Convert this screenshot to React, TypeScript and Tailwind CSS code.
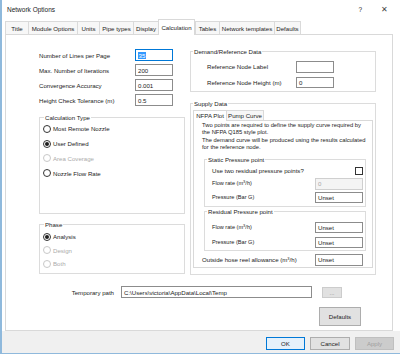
import React from "react";

type FieldProps = {
  value?: string;
  w?: string;
  disabled?: boolean;
  focused?: boolean;
  selected?: boolean;
};

function Field({ value = "", w = "w-[38px]", disabled, focused, selected }: FieldProps) {
  const border = focused
    ? "border-[#0078d7]"
    : disabled
    ? "border-[#cfcfcf]"
    : "border-[#8c8c8c]";
  const bg = disabled ? "bg-[#f4f4f4] text-[#a8a8a8]" : "bg-white";
  return (
    <div className={`${w} h-[11.5px] shrink-0 border ${border} ${bg} flex items-center pl-[2px]`}>
      {selected ? (
        <span className="bg-[#3399ff] text-white px-[0.5px]">{value}</span>
      ) : (
        <span>{value}</span>
      )}
    </div>
  );
}

function Radio({ label, checked, disabled }: { label: string; checked?: boolean; disabled?: boolean }) {
  return (
    <div className="flex items-center h-[14.8px]">
      <span
        className={`w-[8px] h-[8px] rounded-full border bg-white flex items-center justify-center ${
          disabled ? "border-[#c8c8c8]" : "border-[#333333]"
        }`}
      >
        {checked && <span className="w-[4px] h-[4px] rounded-full bg-[#1e1e1e]" />}
      </span>
      <span className={`ml-[2px] ${disabled ? "text-[#ababab]" : ""}`}>{label}</span>
    </div>
  );
}

function PhaseRadio({ label, checked, disabled }: { label: string; checked?: boolean; disabled?: boolean }) {
  return (
    <div className="flex items-center h-[13.5px]">
      <span
        className={`w-[8px] h-[8px] rounded-full border bg-white flex items-center justify-center ${
          disabled ? "border-[#c8c8c8]" : "border-[#333333]"
        }`}
      >
        {checked && <span className="w-[4px] h-[4px] rounded-full bg-[#1e1e1e]" />}
      </span>
      <span className={`ml-[2px] ${disabled ? "text-[#ababab]" : ""}`}>{label}</span>
    </div>
  );
}

const tabs = [
  { t: "Title", w: "w-[23px]" },
  { t: "Module Options", w: "w-[49px]" },
  { t: "Units", w: "w-[22px]" },
  { t: "Pipe types", w: "w-[34px]" },
  { t: "Display", w: "w-[25px]" },
  { t: "Calculation", w: "w-[37px]", sel: true },
  { t: "Tables", w: "w-[24px]" },
  { t: "Network templates", w: "w-[55px]" },
  { t: "Defaults", w: "w-[27px]" },
];

export default function App() {
  return (
    <div className="w-[400px] h-[358px] bg-white overflow-hidden font-['Liberation_Sans',Arial,sans-serif] text-[6.1px] leading-[7px] text-[#1b1b1b]">
      <div className="w-[400px] h-[354px] border-l-[2px] border-b border-[#8fb9dc] flex flex-col">
        {/* Title bar */}
        <div className="h-[19px] flex items-center pl-[5px] shrink-0">
          <span className="text-[6.5px]">Network Options</span>
          <span className="ml-auto mr-[19px] text-[6.5px]">?</span>
          <span className="mr-[12px] text-[7.5px] leading-none text-[#444]">✕</span>
        </div>
        {/* Tabs */}
        <div className="h-[15px] flex items-end pl-[3px] shrink-0">
          {tabs.map((tab) =>
            tab.sel ? (
              <div
                key={tab.t}
                className={`${tab.w} h-[16px] -mb-px relative z-10 bg-white border border-b-0 border-[#d9d9d9] flex items-center justify-center`}
              >
                {tab.t}
              </div>
            ) : (
              <div
                key={tab.t}
                className={`${tab.w} h-[13px] bg-[#f7f7f7] border border-b-0 border-r-0 last:border-r border-[#dadada] flex items-center justify-center`}
              >
                {tab.t}
              </div>
            )
          )}
        </div>
        {/* Content panel */}
        <div className="ml-[3px] w-[388px] h-[297px] shrink-0 border border-[#d9d9d9] bg-white flex flex-col">
          <div className="pt-[13px] pl-[33px] flex gap-[5px]">
            {/* Left column */}
            <div className="w-[146px] flex flex-col">
              <div className="mt-[1px] flex flex-col gap-[3px]">
                {[
                  ["Number of Lines per Page", "35"],
                  ["Max. Number of Iterations", "200"],
                  ["Convergence Accuracy", "0.001"],
                  ["Height Check Tolerance (m)", "0.5"],
                ].map(([l, v], i) => (
                  <div key={l} className="flex items-center h-[12px]">
                    <span className="w-[96px]">{l}</span>
                    <Field value={v} focused={i === 0} selected={i === 0} />
                  </div>
                ))}
              </div>
              <fieldset className="mt-[7.5px] h-[100px] border border-[#dcdcdc] px-[4px]">
                <legend className="px-[1px] leading-[7px]">Calculation Type</legend>
                <div className="pt-[1px] -ml-[1px]">
                  <Radio label="Most Remote Nozzle" />
                  <Radio label="User Defined" checked />
                  <Radio label="Area Coverage" disabled />
                  <Radio label="Nozzle Flow Rate" />
                </div>
              </fieldset>
              <fieldset className="mt-[7px] h-[53px] border border-[#dcdcdc] px-[4px]">
                <legend className="px-[1px] leading-[7px]">Phase</legend>
                <div className="pt-[2.5px] -ml-[1px]">
                  <PhaseRadio label="Analysis" checked />
                  <PhaseRadio label="Design" disabled />
                  <PhaseRadio label="Both" disabled />
                </div>
              </fieldset>
            </div>
            {/* Right column */}
            <div className="w-[186px] flex flex-col">
              <fieldset className="h-[44px] border border-[#dcdcdc] px-[2px]">
                <legend className="px-[1px] leading-[7px]">Demand/Reference Data</legend>
                <div className="pt-[6px] pl-[14px] flex flex-col gap-[4px]">
                  <div className="flex items-center h-[11.5px]">
                    <span className="w-[89px]">Reference Node Label</span>
                    <Field value="" />
                  </div>
                  <div className="flex items-center h-[11.5px]">
                    <span className="w-[89px]">Reference Node Height (m)</span>
                    <Field value="0" />
                  </div>
                </div>
              </fieldset>
              <fieldset className="mt-[7.5px] h-[175px] border border-[#dcdcdc] px-[2px]">
                <legend className="px-[1px] leading-[7px]">Supply Data</legend>
                <div className="mt-[2px] h-[11px] flex items-end">
                  <div className="w-[34px] h-[11px] -mb-px relative z-10 bg-white border border-b-0 border-[#d9d9d9] flex items-center justify-center">
                    NFPA Plot
                  </div>
                  <div className="w-[37px] h-[10px] bg-[#f7f7f7] border border-b-0 border-l-0 border-[#dadada] flex items-center justify-center">
                    Pump Curve
                  </div>
                </div>
                <div className="h-[148px] border border-[#d9d9d9] pl-[8px] pr-[6px]">
                  <p className="pt-[1.5px] text-[5.8px] leading-[7.3px]">
                    Two points are required to define the supply curve required by the NFPA Q185 style plot.
                    <br />
                    The demand curve will be produced using the results calculated for the reference node.
                  </p>
                  <fieldset className="mt-[5px] ml-[2px] h-[51px] border border-[#dcdcdc] px-[2px]">
                    <legend className="px-[1px] leading-[7px]">Static Pressure point</legend>
                    <div className="pt-[2.5px] pl-[5px]">
                      <div className="flex items-center justify-between h-[10px]">
                        <span>Use two residual pressure points?</span>
                        <span className="w-[8px] h-[8px] border border-[#333] bg-white" />
                      </div>
                      <div className="mt-[2.5px] flex items-center justify-between h-[11.5px]">
                        <span className="text-[5.6px]">
                          Flow rate (m<sup className="text-[4px]">3</sup>/h)
                        </span>
                        <Field value="0" w="w-[48px]" disabled />
                      </div>
                      <div className="mt-[2px] flex items-center justify-between h-[11.5px]">
                        <span className="text-[5.6px]">Pressure (Bar G)</span>
                        <Field value="Unset" w="w-[48px]" />
                      </div>
                    </div>
                  </fieldset>
                  <fieldset className="mt-[1px] ml-[2px] h-[43px] border border-[#dcdcdc] px-[2px]">
                    <legend className="px-[1px] leading-[7px]">Residual Pressure point</legend>
                    <div className="pt-[6.5px] pl-[5px] flex flex-col gap-[3.5px]">
                      <div className="flex items-center justify-between h-[11.5px]">
                        <span className="text-[5.6px]">
                          Flow rate (m<sup className="text-[4px]">3</sup>/h)
                        </span>
                        <Field value="Unset" w="w-[48px]" />
                      </div>
                      <div className="flex items-center justify-between h-[11.5px]">
                        <span className="text-[5.6px]">Pressure (Bar G)</span>
                        <Field value="Unset" w="w-[48px]" />
                      </div>
                    </div>
                  </fieldset>
                  <div className="mt-[3px] flex items-center justify-between h-[11.5px] pr-[3px]">
                    <span>
                      Outside hose reel allowance (m<sup className="text-[4px]">3</sup>/h)
                    </span>
                    <Field value="Unset" w="w-[48px]" />
                  </div>
                </div>
              </fieldset>
            </div>
          </div>
          {/* Temporary path */}
          <div className="mt-[11.5px] flex items-center h-[12px]">
            <span className="w-[108px] text-right">Temporary path</span>
            <div className="ml-[7px]">
              <Field value="C:\Users\victoria\AppData\Local\Temp" w="w-[191px]" />
            </div>
            <div className="ml-[10px] w-[20px] h-[11px] bg-[#e1e1e1] border border-[#cccccc] flex items-center justify-center text-[#888]">
              ...
            </div>
          </div>
          <div className="mt-[9px] pl-[313px]">
            <div className="w-[42px] h-[19px] bg-[#e1e1e1] border border-[#adadad] flex items-center justify-center">
              Defaults
            </div>
          </div>
        </div>
        {/* Bottom bar */}
        <div className="flex-1 bg-[#f0f0f0] flex justify-end items-start pt-[6px] pr-[6px] gap-[5px]">
          <div className="w-[39px] h-[13px] bg-[#e5f1fb] border border-[#0078d7] flex items-center justify-center">
            OK
          </div>
          <div className="w-[40px] h-[13px] bg-[#e1e1e1] border border-[#adadad] flex items-center justify-center">
            Cancel
          </div>
          <div className="w-[39px] h-[13px] bg-[#cccccc] border border-[#bfbfbf] flex items-center justify-center text-[#a0a0a0]">
            Apply
          </div>
        </div>
      </div>
    </div>
  );
}
